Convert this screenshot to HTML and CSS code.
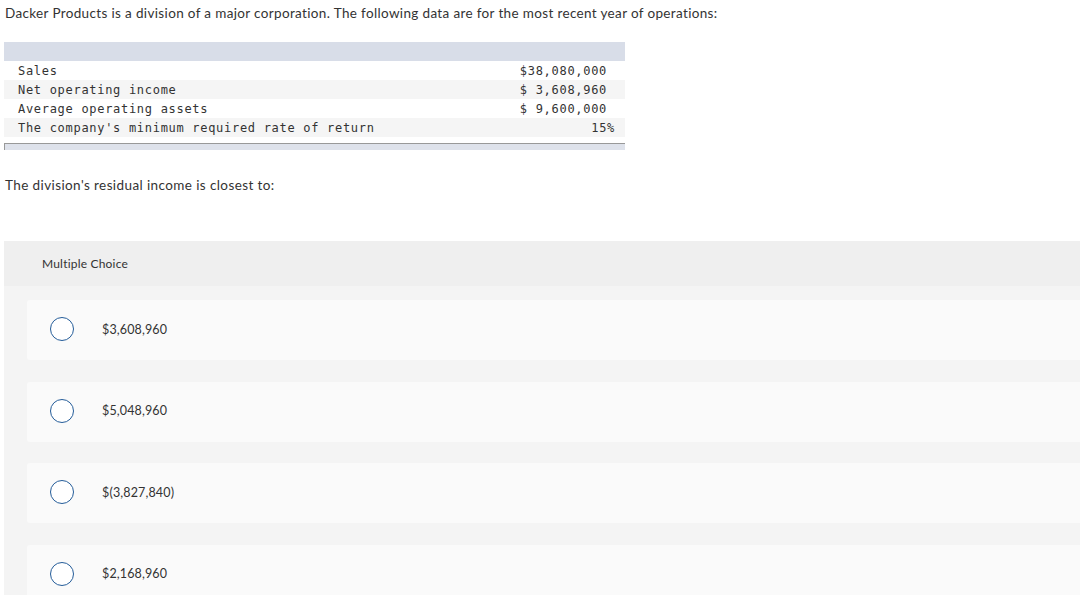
FILE: index.html
```html
<!DOCTYPE html>
<html>
<head>
<meta charset="utf-8">
<link rel="stylesheet" href="styles.css">
</head>
<body>
<p class="intro">Dacker Products is a division of a major corporation. The following data are for the most recent year of operations:</p>
<div class="data">
  <div class="data-head"></div>
  <div class="row"><span>Sales</span><span class="val">$38,080,000</span></div>
  <div class="row alt"><span>Net operating income</span><span class="val">$ 3,608,960</span></div>
  <div class="row"><span>Average operating assets</span><span class="val">$ 9,600,000</span></div>
  <div class="row alt"><span>The company's minimum required rate of return</span><span class="val pct">15%</span></div>
  <div class="data-foot"></div>
</div>
<p class="question">The division's residual income is closest to:</p>
<div class="mc">
  <div class="mc-head">Multiple Choice</div>
  <div class="mc-body">
    <div class="opt"><span class="radio"></span><span class="opt-text">$3,608,960</span></div>
    <div class="opt"><span class="radio"></span><span class="opt-text">$5,048,960</span></div>
    <div class="opt"><span class="radio"></span><span class="opt-text">$(3,827,840)</span></div>
    <div class="opt"><span class="radio"></span><span class="opt-text">$2,168,960</span></div>
  </div>
</div>
</body>
</html>
```
FILE: styles.css
```css
html, body { margin: 0; padding: 0; background: #fff; }
body {
  font-family: "Lato", "Open Sans", sans-serif;
  color: #333;
  overflow: hidden;
  height: 595px;
}
.intro {
  margin: 0;
  padding: 5px 0 0 5px;
  font-size: 13.5px;
  line-height: 16px;
  letter-spacing: 0.35px;
}
.data {
  margin: 21px 0 0 4px;
  width: 621px;
  font-family: "DejaVu Sans Mono", "Liberation Mono", monospace;
  font-size: 12px;
  letter-spacing: 0.7px;
  color: #333;
}
.data-head { height: 19px; background: #d8dde8; }
.row {
  height: 19px;
  display: flex;
  justify-content: space-between;
  align-items: center;
  padding: 0 18px 0 14px;
  background: #fff;
}
.row.alt { background: #f5f5f5; }
.row .pct { margin-right: -8px; }
.data-foot {
  margin-top: 6px;
  height: 6px;
  background: #dee2eb;
  border-top: 1px solid #999;
  border-left: 1px solid #999;
}
.question {
  margin: 0;
  padding: 27px 0 1px 5px;
  font-size: 13.5px;
  line-height: 16px;
  letter-spacing: 0.4px;
}
.mc {
  margin: 47px 0 0 4px;
  background: #f4f4f4;
}
.mc-head {
  height: 45px;
  background: #efefef;
  padding-left: 38px;
  display: flex;
  align-items: center;
  font-size: 12px;
  letter-spacing: 0.2px;
  color: #333;
}
.mc-body {
  padding: 14px 0 0 23px;
  display: flex;
  flex-direction: column;
  gap: 21.5px;
}
.opt {
  height: 60px;
  box-sizing: border-box;
  padding-bottom: 2px;
  background: #fafafa;
  border-radius: 3px 0 0 3px;
  display: flex;
  align-items: center;
  padding-left: 23px;
}
.radio {
  width: 22px;
  height: 22px;
  border: 1.5px solid #245c99;
  border-radius: 50%;
  background: #fff;
  flex: none;
}
.opt-text {
  margin-left: 28px;
  font-size: 12.5px;
  color: #333;
  letter-spacing: 0.15px;
}
```
